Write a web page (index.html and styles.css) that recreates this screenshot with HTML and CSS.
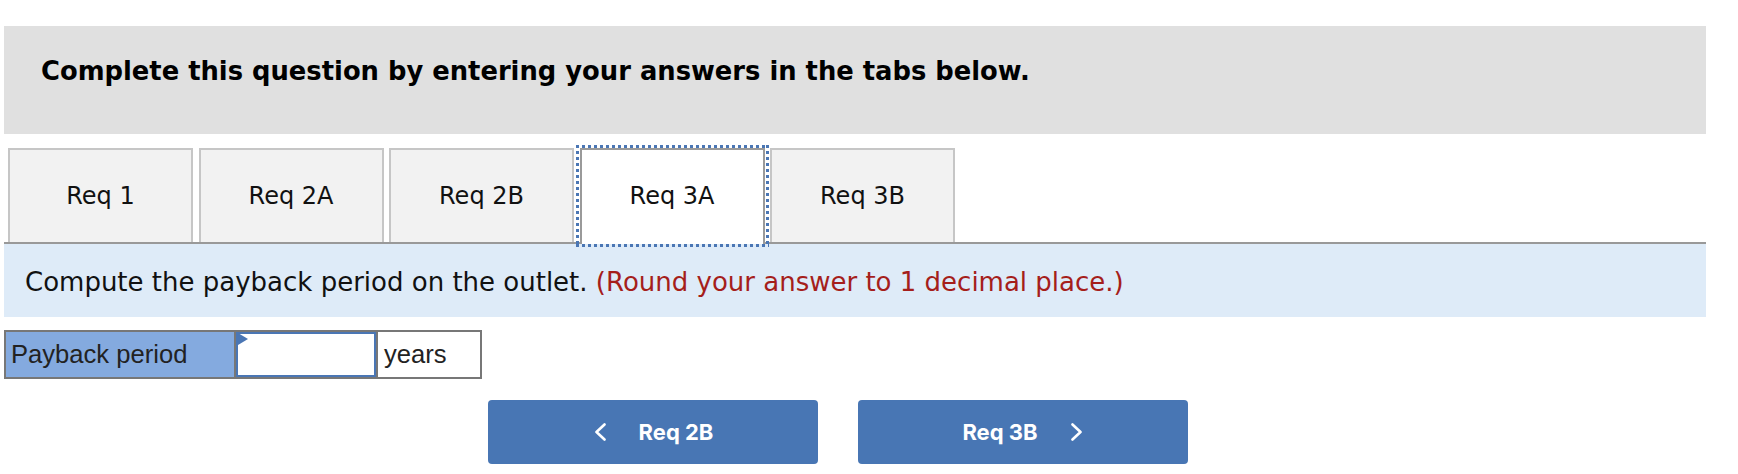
FILE: index.html
```html
<!DOCTYPE html>
<html lang="en">
<head>
<meta charset="utf-8">
<title>Req 3A</title>
<link rel="stylesheet" href="styles.css">
</head>
<body>
<div class="page">
  <div class="banner">
    <h2 class="banner-title">Complete this question by entering your answers in the tabs below.</h2>
  </div>

  <div class="tabs">
    <div class="tab">Req 1</div>
    <div class="tab">Req 2A</div>
    <div class="tab">Req 2B</div>
    <div class="tab tab-active">Req 3A</div>
    <div class="tab">Req 3B</div>
  </div>

  <div class="prompt">
    <p class="prompt-text">Compute the payback period on the outlet. <span class="prompt-note">(Round your answer to 1 decimal place.)</span></p>
  </div>

  <div class="answer-row">
    <div class="answer-label">Payback period</div>
    <div class="answer-input-cell">
      <span class="answer-marker"></span>
      <input class="answer-input" type="text" aria-label="Payback period">
    </div>
    <div class="answer-unit">years</div>
  </div>

  <div class="nav">
    <button class="nav-btn" type="button">
      <svg class="nav-chev" width="14" height="18" viewBox="0 0 14 18" aria-hidden="true"><path d="M11.5 1.5 L3.5 9 L11.5 16.5" fill="none" stroke="#fff" stroke-width="2.6" stroke-linecap="round" stroke-linejoin="round"/></svg>
      <span>Req 2B</span>
    </button>
    <button class="nav-btn" type="button">
      <span>Req 3B</span>
      <svg class="nav-chev" width="14" height="18" viewBox="0 0 14 18" aria-hidden="true"><path d="M2.5 1.5 L10.5 9 L2.5 16.5" fill="none" stroke="#fff" stroke-width="2.6" stroke-linecap="round" stroke-linejoin="round"/></svg>
    </button>
  </div>
</div>
</body>
</html>
```

FILE: styles.css
```css
html, body {
  margin: 0;
  padding: 0;
  background: #ffffff;
}

.page {
  margin-left: 4px;
  padding-top: 26px;
  width: 1702px;
  font-family: "DejaVu Sans", Verdana, sans-serif;
  color: #000;
}

/* banner */
.banner {
  background: #e0e0e0;
  height: 108px;
  box-sizing: border-box;
  padding: 30px 0 0 37px;
}

.banner-title {
  margin: 0;
  font-size: 25.8px;
  line-height: 1.2;
  font-weight: bold;
  color: #000;
}

/* tabs */
.tabs {
  display: flex;
  gap: 5.5px;
  margin-top: 14px;
  padding-left: 4px;
  border-bottom: 2px solid #999999;
  height: 94px;
}

.tab {
  position: relative;
  width: 185px;
  height: 94px;
  box-sizing: border-box;
  border: 2px solid #c6c6c6;
  border-bottom: none;
  background: #f2f2f2;
  display: flex;
  align-items: center;
  justify-content: center;
  font-size: 24px;
  color: #111;
}

.tab-active {
  background: #ffffff;
  border-color: #9a9a9a;
  height: 96px;
  margin-bottom: -2px;
  padding-bottom: 2px;
  z-index: 1;
}

.tab-active::after {
  content: "";
  position: absolute;
  left: -6px;
  right: -6px;
  top: -5px;
  bottom: -3px;
  background:
    repeating-linear-gradient(90deg, #4a76b4 0 3px, transparent 3px 6px) left top / 100% 3px no-repeat,
    repeating-linear-gradient(90deg, #4a76b4 0 3px, transparent 3px 6px) left bottom / 100% 3px no-repeat,
    repeating-linear-gradient(180deg, #4a76b4 0 3px, transparent 3px 6px) left top / 3px 100% no-repeat,
    repeating-linear-gradient(180deg, #4a76b4 0 3px, transparent 3px 6px) right top / 3px 100% no-repeat;
  pointer-events: none;
}

/* prompt */
.prompt {
  background: #deebf8;
  height: 73px;
  box-sizing: border-box;
  padding: 0 0 0 21px;
  display: flex;
  align-items: center;
}

.prompt-text {
  margin: 0;
  padding-top: 4px;
  font-size: 26px;
  line-height: 1.2;
  color: #111;
}

.prompt-note {
  color: #a51e1b;
}

/* answer row */
.answer-row {
  display: inline-flex;
  margin-top: 13px;
  height: 49px;
  box-sizing: border-box;
  border: 2px solid #777777;
  font-family: "Liberation Sans", Arial, sans-serif;
  font-size: 25.6px;
  color: #222;
}

.answer-label {
  width: 230px;
  box-sizing: border-box;
  padding-left: 5px;
  background: #84aadf;
  border-right: 2px solid #777777;
  display: flex;
  align-items: center;
}

.answer-input-cell {
  position: relative;
  width: 140px;
  display: flex;
}

.answer-input {
  width: 100%;
  height: 100%;
  box-sizing: border-box;
  margin: 0;
  border: 2px solid #4a76b4;
  background: #fff;
  font: inherit;
  padding: 0 6px;
  outline: none;
}

.answer-marker {
  position: absolute;
  left: 2px;
  top: 1px;
  width: 0;
  height: 0;
  border-top: 6px solid transparent;
  border-bottom: 6px solid transparent;
  border-left: 10px solid #4a76b4;
}

.answer-unit {
  width: 104px;
  box-sizing: border-box;
  border-left: 2px solid #777777;
  padding-left: 6px;
  display: flex;
  align-items: center;
}

/* nav buttons */
.nav {
  display: flex;
  gap: 40px;
  margin-top: 21px;
  padding-left: 484px;
}

.nav-btn {
  width: 330px;
  height: 64px;
  border: none;
  border-radius: 4px;
  background: #4876b4;
  color: #ffffff;
  font-family: Inter, Roboto, sans-serif;
  font-weight: 700;
  font-size: 22px;
  display: flex;
  align-items: center;
  justify-content: center;
  gap: 32px;
  padding: 0;
  cursor: pointer;
}

.nav-chev {
  display: block;
}
```
